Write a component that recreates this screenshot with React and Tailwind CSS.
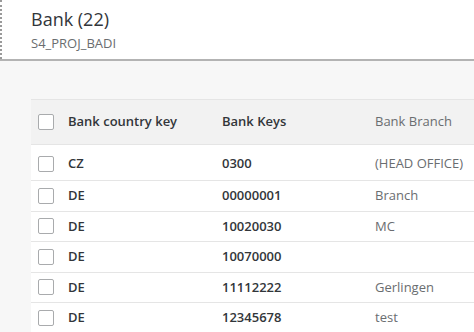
const rows = [
  { country: 'CZ', key: '0300', branch: '(HEAD OFFICE)' },
  { country: 'DE', key: '00000001', branch: 'Branch' },
  { country: 'DE', key: '10020030', branch: 'MC' },
  { country: 'DE', key: '10070000', branch: '' },
  { country: 'DE', key: '11112222', branch: 'Gerlingen' },
  { country: 'DE', key: '12345678', branch: 'test' },
];

const Checkbox = () => (
  <div className="w-[16px] h-[16px] rounded-[2px] border border-[#a9abad] bg-white shrink-0" />
);

export default function App() {
  return (
    <div className="w-[474px] h-[332px] overflow-hidden bg-[#f7f7f7] font-['Open_Sans',sans-serif]">
      {/* Header */}
      <div className="h-[59px] bg-white border-l-2 border-dotted border-l-[#9a9a9a] pl-[29px] pt-[8px]">
        <div className="text-[18px] leading-[22px] text-[#32363a]">Bank (22)</div>
        <div className="text-[13px] leading-[16px] mt-[5px] text-[#6a6d70]">S4_PROJ_BADI</div>
      </div>
      <div className="h-[2px] bg-[#b3b3b3]" />

      {/* Table */}
      <div className="ml-[31px] mt-[38px] bg-white">
        <div className="h-[45px] flex items-center bg-[#f2f2f2] border-t border-[#e5e5e5] text-[13px] text-[#32363a]">
          <div className="w-[37px] pl-[7px]">
            <Checkbox />
          </div>
          <div className="w-[154px] font-semibold">Bank country key</div>
          <div className="w-[153px] font-semibold">Bank Keys</div>
          <div className="text-[#6a6d70]">Bank Branch</div>
        </div>
        {rows.map((r, i) => (
          <div
            key={i}
            className={`${i === 0 ? 'h-[36px] pt-[2px]' : 'h-[30.5px]'} flex items-center border-t border-[#e5e5e5] text-[13px] text-[#32363a]`}
          >
            <div className="w-[37px] pl-[7px]">
              <Checkbox />
            </div>
            <div className="w-[154px] font-semibold">{r.country}</div>
            <div className="w-[153px] font-semibold">{r.key}</div>
            <div className="text-[#6a6d70]">{r.branch}</div>
          </div>
        ))}
      </div>
    </div>
  );
}
